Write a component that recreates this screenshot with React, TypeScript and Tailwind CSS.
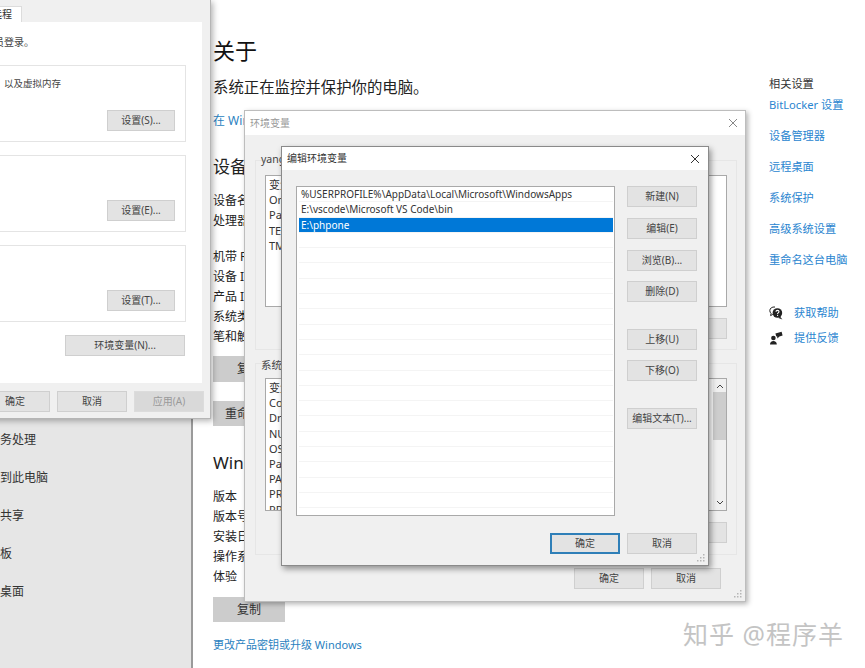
import type { ReactNode } from "react";

const settingsLinks = ["BitLocker 设置", "设备管理器", "远程桌面", "系统保护", "高级系统设置", "重命名这台电脑"];
const sideItems = ["多任务处理", "投影到此电脑", "体验共享", "剪贴板", "远程桌面", "关于"];
const userVars = ["变量", "OneDrive", "Path", "TEMP", "TMP"];
const systemVars = ["变量", "ComSpec", "DriverData", "NUMBER_OF_PROCESSORS", "OS", "Path", "PATHEXT", "PROCESSOR_ARCHITECTURE", "PROCESSOR_LEVEL"];
const pathRows = ["%USERPROFILE%\\AppData\\Local\\Microsoft\\WindowsApps", "E:\\vscode\\Microsoft VS Code\\bin", "E:\\phpone"];

function WinButton({ children, className = "", skin = "border border-[#cfcfcf] bg-[#e3e3e3] text-[#444]" }: { children: ReactNode; className?: string; skin?: string }) {
  return <div className={`flex h-[21px] shrink-0 items-center justify-center text-[10px] ${skin} ${className}`}>{children}</div>;
}

function CloseIcon({ color }: { color: string }) {
  return (
    <svg width="10" height="10" viewBox="0 0 10 10" fill="none" stroke={color} strokeWidth="1">
      <path d="M1 1l8 8M9 1l-8 8" />
    </svg>
  );
}

function Grip() {
  return (
    <svg className="absolute bottom-[3px] right-[3px]" width="9" height="9" viewBox="0 0 9 9" fill="#b5b5b5">
      <rect x="7" y="1" width="1.5" height="1.5" />
      <rect x="4" y="4" width="1.5" height="1.5" />
      <rect x="7" y="4" width="1.5" height="1.5" />
      <rect x="1" y="7" width="1.5" height="1.5" />
      <rect x="4" y="7" width="1.5" height="1.5" />
      <rect x="7" y="7" width="1.5" height="1.5" />
    </svg>
  );
}

function HelpIcon() {
  return (
    <svg width="14" height="14" viewBox="0 0 14 14">
      <path d="M6 1C3 .6.8 2.4.8 4.6c0 1.2.5 2.1 1.3 2.8L1.6 9.6l2.2-1.2" fill="none" stroke="#222" strokeWidth="1" />
      <circle cx="8.4" cy="7" r="4.8" fill="#222" />
      <path d="M11 10.4l2.4 3-4-1.4z" fill="#222" />
      <path d="M7 5.8c0-1.9 3-1.9 3 0 0 1.1-1.5 1.1-1.5 2.2" fill="none" stroke="#fff" strokeWidth="1.1" />
      <rect x="8" y="8.8" width="1.1" height="1.1" fill="#fff" />
    </svg>
  );
}

function FeedbackIcon() {
  return (
    <svg width="14" height="14" viewBox="0 0 14 14" fill="#222">
      <circle cx="4.4" cy="7" r="2.3" />
      <path d="M1 13.6c0-2.4 1.4-3.6 3.4-3.6s3.4 1.2 3.4 3.6z" />
      <path d="M6.4 2.4L12.6 .8l1 3.8-3.2.8L8.4 7.4l-.3-2.2-.8.2z" />
    </svg>
  );
}

function VarList({ rows, heightClass, scroll }: { rows: string[]; heightClass: string; scroll?: boolean }) {
  return (
    <div className={`flex border border-[#a9a9a9] bg-white ${heightClass}`}>
      <div className="flex-1 overflow-hidden pl-[3px] pt-[1px] text-[11px] text-[#333]">
        {rows.map((row) => (
          <div key={row} className="h-[15.2px] whitespace-nowrap leading-[15.2px]">
            {row}
          </div>
        ))}
      </div>
      {scroll && (
        <div className="flex w-[13px] flex-col items-center bg-[#f0f0f0] text-[#444]">
          <svg className="mt-[5px] shrink-0" width="8" height="5" viewBox="0 0 8 5" fill="none" stroke="currentColor">
            <path d="M1 4l3-3 3 3" />
          </svg>
          <div className="mt-[3px] h-[48px] w-full bg-[#cdcdcd]" />
          <div className="flex-1" />
          <svg className="mb-[5px] shrink-0" width="8" height="5" viewBox="0 0 8 5" fill="none" stroke="currentColor">
            <path d="M1 1l3 3 3-3" />
          </svg>
        </div>
      )}
    </div>
  );
}

function SystemPropsWindow() {
  return (
    <div className="absolute left-[-200px] top-0 flex h-[419px] w-[411px] flex-col border-r border-b border-[#b5b5b5] bg-[#f0f0f0] shadow-[2px_2px_6px_rgba(0,0,0,0.3)]">
      <div className="flex h-[22px] items-end">
        <div className="ml-[186px] h-[16px] w-[36px] border border-b-0 border-[#dcdcdc] bg-white pl-[5px] text-[10px] leading-[15px] text-[#333]">
          远程
        </div>
      </div>
      <div className="mr-[8px] flex h-[361px] flex-col bg-white pl-[10px] pr-[16px] pt-[13px] text-[10px] text-[#444]">
        <div className="-ml-[10px] h-[15px] w-[234px] self-start overflow-hidden whitespace-nowrap text-right leading-[15px]">你必须作为管理员登录。</div>
        <div className="mt-[15px] flex h-[77px] flex-col border border-[#e4e4e4] pb-[10px] pr-[10px]">
          <div className="ml-[193px] mt-[11px] flex-1 whitespace-nowrap text-[9.5px] leading-[14px]">以及虚拟内存</div>
          <WinButton className="w-[68px] self-end">设置(S)...</WinButton>
        </div>
        <div className="mt-[13px] flex h-[77px] flex-col justify-end border border-[#e4e4e4] pb-[10px] pr-[10px]">
          <WinButton className="w-[68px] self-end">设置(E)...</WinButton>
        </div>
        <div className="mt-[13px] flex h-[77px] flex-col justify-end border border-[#e4e4e4] pb-[10px] pr-[10px]">
          <WinButton className="w-[68px] self-end">设置(T)...</WinButton>
        </div>
        <WinButton className="mr-[1px] mt-[13px] w-[120px] self-end">环境变量(N)...</WinButton>
      </div>
      <div className="mr-[6px] mt-[8px] flex justify-end gap-[7px]">
        <WinButton className="w-[70px]">确定</WinButton>
        <WinButton className="w-[70px]">取消</WinButton>
        <WinButton className="w-[70px]" skin="border border-[#dcdcdc] bg-[#d9d9d9] text-[#999]">
          应用(A)
        </WinButton>
      </div>
    </div>
  );
}

function EnvWindow() {
  return (
    <div className="absolute left-[244px] top-[110px] flex h-[492px] w-[502px] flex-col border border-[#bdbdbd] bg-[#f0f0f0] shadow-[2px_2px_5px_rgba(0,0,0,0.3)]">
      <div className="flex h-[24px] shrink-0 items-center justify-between bg-white pl-[5px] pr-[7px] text-[10px] text-[#999]">
        <span>环境变量</span>
        <CloseIcon color="#888" />
      </div>
      <div className="ml-[10px] mr-[8px] mt-[25px] h-[190px] shrink-0 border border-[#e6e6e6] px-[9px]">
        <div className="-ml-[4px] -mt-[9px] h-[14px] text-[10.5px] leading-[14px] text-[#444]">yang 的用户变量(U)</div>
        <div className="mt-[9px]">
          <VarList rows={userVars} heightClass="h-[132px]" />
        </div>
        <div className="mt-[11px] flex justify-end">
          <WinButton className="w-[70px]">删除(D)</WinButton>
        </div>
      </div>
      <div className="ml-[10px] mr-[8px] mt-[13px] h-[192px] shrink-0 border border-[#e6e6e6] px-[9px]">
        <div className="-ml-[4px] -mt-[6px] h-[14px] text-[10.5px] leading-[14px] text-[#444]">系统变量(S)</div>
        <div className="mt-[6px]">
          <VarList rows={systemVars} heightClass="h-[133px]" scroll />
        </div>
        <div className="mt-[11px] flex justify-end">
          <WinButton className="w-[70px]">删除(L)</WinButton>
        </div>
      </div>
      <div className="mr-[24px] mt-[13px] flex justify-end gap-[7px]">
        <WinButton className="w-[70px]">确定</WinButton>
        <WinButton className="w-[70px]">取消</WinButton>
      </div>
      <Grip />
    </div>
  );
}

function EditWindow() {
  const rows = Array.from({ length: 21 }, (_, i) => pathRows[i] ?? "");
  return (
    <div className="absolute left-[281px] top-[146px] flex h-[420px] w-[428px] flex-col border border-[#8a8a8a] bg-[#f0f0f0] shadow-[2px_3px_6px_rgba(0,0,0,0.4)]">
      <div className="flex h-[23px] shrink-0 items-center justify-between bg-white pl-[5px] pr-[8px] text-[10px] text-[#333]">
        <span>编辑环境变量</span>
        <CloseIcon color="#333" />
      </div>
      <div className="flex gap-[12px] pl-[14px] pt-[16px]">
        <div className="h-[330px] w-[319px] overflow-hidden border border-[#a9a9a9] bg-white pl-[2px] pr-[1px]">
          {rows.map((row, i) => (
            <div
              key={i}
              className={`h-[15.3px] whitespace-nowrap border-b border-[#f4f4f4] pl-[2px] text-[10px] leading-[14px] ${i === 2 ? "bg-[#0078d7] text-white" : "text-[#333]"}`}
            >
              {row}
            </div>
          ))}
        </div>
        <div className="flex w-[70px] flex-col">
          <WinButton>新建(N)</WinButton>
          <WinButton className="mt-[11px]">编辑(E)</WinButton>
          <WinButton className="mt-[11px]">浏览(B)...</WinButton>
          <WinButton className="mt-[10px]">删除(D)</WinButton>
          <WinButton className="mt-[27px]">上移(U)</WinButton>
          <WinButton className="mt-[10px]">下移(O)</WinButton>
          <WinButton className="mt-[27px]">编辑文本(T)...</WinButton>
        </div>
      </div>
      <div className="mr-[11px] mt-[17px] flex justify-end gap-[7px]">
        <WinButton className="w-[70px]" skin="border-2 border-[#2f7fb8] bg-[#e3e3e3] text-[#444]">
          确定
        </WinButton>
        <WinButton className="w-[70px]">取消</WinButton>
      </div>
      <Grip />
    </div>
  );
}

function GrayButton({ children, className }: { children: ReactNode; className: string }) {
  return (
    <div className={`flex shrink-0 items-center justify-center bg-[#cccccc] text-[12px] text-[#333] ${className}`}>
      {children}
    </div>
  );
}

function Spec({ label, className = "" }: { label: string; className?: string }) {
  return <div className={`h-[20px] whitespace-nowrap text-[12px] leading-[20px] text-[#222] ${className}`}>{label}</div>;
}

export default function App() {
  return (
    <div className="relative flex h-[668px] w-[865px] overflow-hidden bg-white font-['Noto_Sans','Noto_Sans_CJK_SC',sans-serif]">
      <aside className="h-full w-[193px] shrink-0 border-r-2 border-[#9a9a9a] bg-[#e6e6e6] pt-[430px]">
        {sideItems.map((item) => (
          <div key={item} className="-ml-[24px] h-[38px] whitespace-nowrap text-[12px] leading-[20px] text-[#333]">
            {item}
          </div>
        ))}
      </aside>

      <main className="flex flex-1">
        <div className="w-[576px] shrink-0 pl-[20px] pt-[35px]">
          <h1 className="h-[30px] text-[22px] leading-[30px] text-[#111]">关于</h1>
          <p className="mt-[12px] h-[22px] text-[15.4px] leading-[22px] text-[#222]">系统正在监控并保护你的电脑。</p>
          <a className="mt-[13px] block h-[18px] text-[12px] leading-[18px] text-[#2a7fc0]">在 Windows 安全中心中查看详细信息</a>
          <h2 className="mt-[25px] h-[24px] text-[17px] leading-[24px] text-[#222]">设备规格</h2>
          <Spec label="设备名称" className="mt-[12px]" />
          <Spec label="处理器" />
          <Spec label="机带 RAM" className="mt-[16px]" />
          <Spec label="设备 ID" />
          <Spec label="产品 ID" />
          <Spec label="系统类型" />
          <Spec label="笔和触控" />
          <GrayButton className="mt-[9px] h-[26px] w-[72px]">复制</GrayButton>
          <GrayButton className="mt-[19px] h-[25px] w-[108px]">重命名这台电脑</GrayButton>
          <h2 className="mt-[25px] h-[24px] text-[17px] leading-[24px] text-[#222]">Windows 规格</h2>
          <Spec label="版本" className="mt-[12px]" />
          <Spec label="版本号" />
          <Spec label="安装日期" />
          <Spec label="操作系统版本" />
          <Spec label="体验" />
          <GrayButton className="mt-[10px] h-[25px] w-[72px]">复制</GrayButton>
          <a className="mt-[14px] block h-[18px] text-[11px] leading-[18px] text-[#2a7fc0]">更改产品密钥或升级 Windows</a>
        </div>

        <div className="pt-[76px] text-[11.2px] leading-[16px]">
          <div className="h-[16px] text-[#333]">相关设置</div>
          <div className="mt-[5px] flex flex-col gap-[15px] text-[#2a85d0]">
            {settingsLinks.map((link) => (
              <a key={link} className="h-[16px] whitespace-nowrap">
                {link}
              </a>
            ))}
          </div>
          <div className="mt-[37px] flex h-[16px] items-center gap-[11px] text-[#2a85d0]">
            <HelpIcon />
            <span>获取帮助</span>
          </div>
          <div className="mt-[9px] flex h-[16px] items-center gap-[11px] text-[#2a85d0]">
            <FeedbackIcon />
            <span>提供反馈</span>
          </div>
        </div>
      </main>

      <SystemPropsWindow />
      <EnvWindow />
      <EditWindow />

      <div className="absolute left-[683px] top-[617px] whitespace-nowrap text-[25px] leading-[34px] tracking-[1px] text-[#c4c4c4]">知乎 @程序羊</div>
    </div>
  );
}
